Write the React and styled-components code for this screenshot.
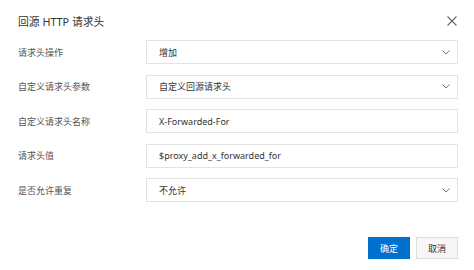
import React from "react";
import styled, { createGlobalStyle } from "styled-components";

const Global = createGlobalStyle`
  html, body { margin: 0; padding: 0; background: #fff; }
  body { font-family: "Noto Sans", "Noto Sans CJK SC", sans-serif; }
  * { box-sizing: border-box; }
`;

const Dialog = styled.div`
  width: 474px;
  height: 270px;
  background: #fff;
  display: flex;
  flex-direction: column;
  padding: 0 16px 0 18px;
`;

const Header = styled.div`
  height: 40px;
  display: flex;
  align-items: center;
  justify-content: space-between;
  padding-top: 1px;
`;

const Title = styled.div`
  font-size: 10.8px;
  color: #333;
`;

const Close = styled.button`
  border: 0;
  background: none;
  padding: 0;
  width: 14px;
  height: 14px;
  margin-right: -1px;
  display: flex;
  align-items: center;
  justify-content: center;
  cursor: pointer;
`;

const Form = styled.div`
  display: flex;
  flex-direction: column;
  gap: 10.5px;
`;

const Row = styled.div`
  display: grid;
  grid-template-columns: 128px 1fr;
  align-items: center;
  height: 24px;
`;

const Label = styled.div`
  font-size: 9px;
  color: #555;
`;

const Field = styled.div`
  height: 24px;
  border: 1px solid #e3e3e3;
  display: flex;
  align-items: center;
  justify-content: space-between;
  padding: 0 7px 0 12px;
  font-size: 9px;
  color: #333;
`;

const Footer = styled.div`
  margin-top: auto;
  margin-bottom: 11px;
  display: flex;
  justify-content: flex-end;
  gap: 6px;
`;

const Button = styled.button`
  height: 22px;
  width: 42px;
  padding: 0;
  font-size: 9px;
  font-family: "Noto Sans", "Noto Sans CJK SC", sans-serif;
  border: 1px solid ${(p) => (p.$primary ? "#0070cc" : "#dedede")};
  background: ${(p) => (p.$primary ? "#0070cc" : "#f7f7f7")};
  color: ${(p) => (p.$primary ? "#fff" : "#333")};
  cursor: pointer;
`;

const Chevron = () => (
  <svg width="8" height="5" viewBox="0 0 8 5">
    <path d="M0.5 0.5 L4 4 L7.5 0.5" fill="none" stroke="#777" strokeWidth="1" />
  </svg>
);

const rows = [
  { label: "请求头操作", value: "增加", select: true },
  { label: "自定义请求头参数", value: "自定义回源请求头", select: true },
  { label: "自定义请求头名称", value: "X-Forwarded-For" },
  { label: "请求头值", value: "$proxy_add_x_forwarded_for" },
  { label: "是否允许重复", value: "不允许", select: true },
];

export default function App() {
  return (
    <>
      <Global />
      <Dialog>
        <Header>
          <Title>回源 HTTP 请求头</Title>
          <Close aria-label="close">
            <svg width="10" height="10" viewBox="0 0 10 10">
              <path d="M0.5 0.5 L9.5 9.5 M9.5 0.5 L0.5 9.5" stroke="#666" strokeWidth="1.1" />
            </svg>
          </Close>
        </Header>
        <Form>
          {rows.map((r) => (
            <Row key={r.label}>
              <Label>{r.label}</Label>
              <Field>
                <span>{r.value}</span>
                {r.select && <Chevron />}
              </Field>
            </Row>
          ))}
        </Form>
        <Footer>
          <Button $primary>确定</Button>
          <Button>取消</Button>
        </Footer>
      </Dialog>
    </>
  );
}
